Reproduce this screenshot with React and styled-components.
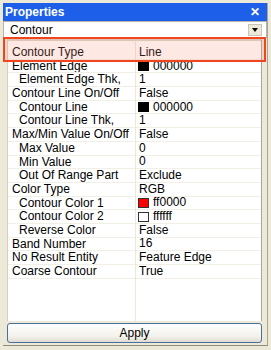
import { Fragment } from 'react';
import styled, { createGlobalStyle } from 'styled-components';

const Global = createGlobalStyle`
  html, body {
    margin: 0;
    padding: 0;
    background: #ece9d8;
  }
  body {
    font-family: 'Liberation Sans', Arial, sans-serif;
    font-size: 12px;
    color: #000;
  }
`;

const Frame = styled.div`
  position: relative;
  width: 271px;
  height: 350px;
  padding: 3px 3px 4px 3px;
  box-sizing: border-box;
  display: flex;
  flex-direction: column;
`;

const Panel = styled.div`
  flex: 1;
  display: flex;
  flex-direction: column;
  border-right: 1px solid #a8a497;
  border-bottom: 1px solid #8e8b80;
  background: #ece9d8;
`;

const TitleBar = styled.div`
  height: 18px;
  background: #1d5fe8;
  color: #fff;
  font-weight: bold;
  font-size: 12px;
  display: flex;
  align-items: center;
  justify-content: space-between;
  padding: 0 7px 0 2px;
`;

const Close = styled.span`
  font-size: 12px;
  font-weight: bold;
  line-height: 1;
`;

const Combo = styled.div`
  height: 15px;
  background: #fff;
  border: 1px solid #b6b3a6;
  display: flex;
  align-items: center;
  justify-content: space-between;
  padding: 0 4px 0 6px;
`;

const DropBtn = styled.div`
  width: 12px;
  height: 10px;
  background: #ece9d8;
  border: 1px solid #c8c5b8;
  display: flex;
  align-items: center;
  justify-content: center;
  &::after {
    content: '';
    border-left: 3px solid transparent;
    border-right: 3px solid transparent;
    border-top: 4px solid #000;
  }
`;

const Grid = styled.div`
  margin: 0 5px 0 4px;
  height: 283px;
  border-top: 3px solid #d9d4c6;
  border-left: 1px solid #d5d0c3;
  border-right: 1px solid #a9a698;
  background: #fff;
  padding-top: 5px;
  display: grid;
  grid-template-columns: 128px 1fr;
  grid-auto-rows: 13.69px;
  align-content: start;
  box-sizing: border-box;
  position: relative;
  &::after {
    content: '';
    position: absolute;
    left: 127px;
    top: 0;
    bottom: 0;
    border-left: 1px solid #ece9d8;
  }
`;

const Label = styled.div`
  padding-left: ${(p) => (p.$child ? 11 : 4)}px;
  border-bottom: 1px solid #f1efe6;
  line-height: 13px;
  white-space: nowrap;
  overflow: hidden;
`;

const Value = styled.div`
  padding-left: 3px;
  border-bottom: 1px solid #f1efe6;
  line-height: 13px;
  display: flex;
  align-items: center;
  gap: 4px;
  white-space: nowrap;
`;

const Swatch = styled.span`
  width: ${(p) => (p.$bordered ? 9 : 11)}px;
  height: ${(p) => (p.$bordered ? 8 : 10)}px;
  background: ${(p) => p.$color};
  border: ${(p) => (p.$bordered ? '1px solid #333' : 'none')};
  margin-left: -1px;
`;

const Footer = styled.div`
  flex: 1;
  display: flex;
  align-items: center;
  padding: 0 5px 0 4px;
`;

const ApplyButton = styled.button`
  width: 100%;
  height: 20px;
  border: 1px solid #4a6f9c;
  border-radius: 3px;
  background: linear-gradient(#ffffff, #f2f1ea 70%, #dedbd0);
  font-family: 'Liberation Sans', Arial, sans-serif;
  font-size: 12px;
  color: #000;
  padding: 0;
`;

const Highlight = styled.div`
  position: absolute;
  left: 3px;
  top: 37px;
  width: 263px;
  height: 25px;
  box-sizing: border-box;
  border: 2px solid #f2451f;
  background: rgba(250, 140, 120, 0.2);
  pointer-events: none;
`;

const rows = [
  ['Contour Type', 'Line'],
  ['Element Edge', '000000', { color: '#000' }],
  ['Element Edge Thk,', '1', null, true],
  ['Contour Line On/Off', 'False'],
  ['Contour Line', '000000', { color: '#000' }, true],
  ['Contour Line Thk,', '1', null, true],
  ['Max/Min Value On/Off', 'False'],
  ['Max Value', '0', null, true],
  ['Min Value', '0', null, true],
  ['Out Of Range Part', 'Exclude', null, true],
  ['Color Type', 'RGB'],
  ['Contour Color 1', 'ff0000', { color: '#ff0000', bordered: true }, true],
  ['Contour Color 2', 'ffffff', { color: '#ffffff', bordered: true }, true],
  ['Reverse Color', 'False', null, true],
  ['Band Number', '16'],
  ['No Result Entity', 'Feature Edge'],
  ['Coarse Contour', 'True'],
];

export default function App() {
  return (
    <Frame>
      <Global />
      <Panel>
        <TitleBar>
          <span>Properties</span>
          <Close>✕</Close>
        </TitleBar>
        <Combo>
          <span>Contour</span>
          <DropBtn />
        </Combo>
        <Grid>
          {rows.map(([label, value, swatch, child]) => (
            <Fragment key={label}>
              <Label $child={child}>{label}</Label>
              <Value>
                {swatch && <Swatch $color={swatch.color} $bordered={swatch.bordered} />}
                {value}
              </Value>
            </Fragment>
          ))}
        </Grid>
        <Footer>
          <ApplyButton>Apply</ApplyButton>
        </Footer>
      </Panel>
      <Highlight />
    </Frame>
  );
}
